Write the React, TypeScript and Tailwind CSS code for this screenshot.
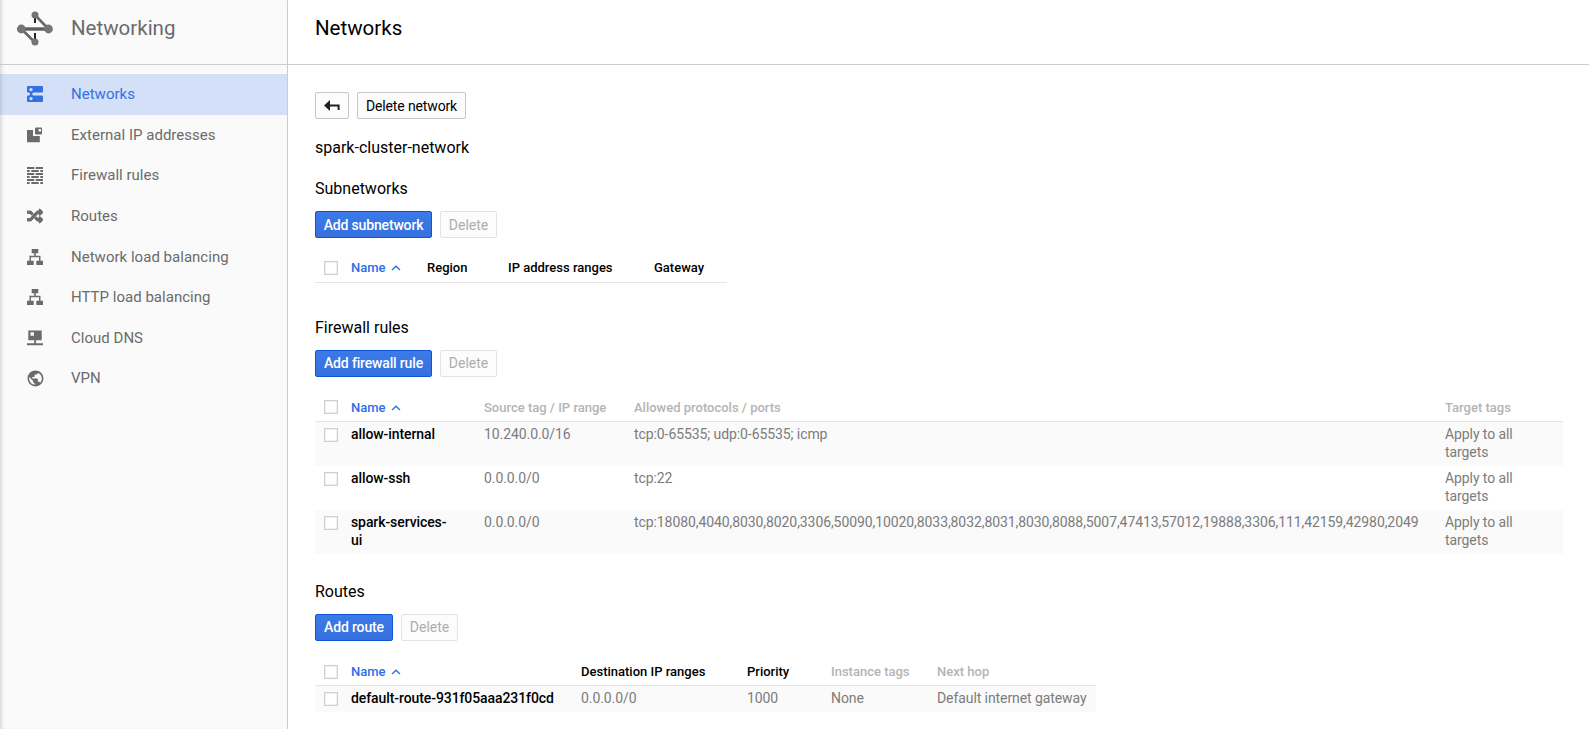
import type { ReactNode } from "react";
import { FaRandom } from "react-icons/fa";
import { MdPublic } from "react-icons/md";
import clsx from "clsx";

const NetworksIcon = () => (
  <svg width="16" height="16" viewBox="0 0 16 16" fill="currentColor">
    <path
      fillRule="evenodd"
      d="M1 0h14a1 1 0 0 1 1 1v4.6a1 1 0 0 1-1 1H6.2L5 8l1.2 1.4H15a1 1 0 0 1 1 1V15a1 1 0 0 1-1 1H1a1 1 0 0 1-1-1v-4.6a1 1 0 0 1 1-1h1.2L3.2 8 2.2 6.6H1a1 1 0 0 1-1-1V1a1 1 0 0 1 1-1ZM4 1.9a1.7 1.7 0 1 0 0 3.4 1.7 1.7 0 0 0 0-3.4ZM4 10.9a1.7 1.7 0 1 0 0 3.4 1.7 1.7 0 0 0 0-3.4Z"
    />
  </svg>
);

const ExternalIpIcon = () => (
  <svg width="16" height="16" viewBox="0 0 16 16" fill="currentColor">
    <path d="M0 3h6v6h6.8v6.2H0Z" />
    <path
      fillRule="evenodd"
      d="M9 .4h5a1 1 0 0 1 1 1v5a1 1 0 0 1-1 1H9a1 1 0 0 1-1-1v-5a1 1 0 0 1 1-1Zm2.6 1.6v2.4H14V2Z"
    />
  </svg>
);

const FirewallIcon = () => (
  <svg width="16" height="17" viewBox="0 0 16 17" fill="none" stroke="currentColor" strokeWidth="1.9">
    <path d="M0 1h7.3M8.7 1H16M0 7h7.3M8.7 7H16M0 13h7.3M8.7 13H16" />
    <path d="M0 4h2.7M4.3 4h7.4M13.3 4H16M0 10h2.7M4.3 10h7.4M13.3 10H16M0 16h2.7M4.3 16h7.4M13.3 16H16" />
  </svg>
);

const BalancerIcon = () => (
  <svg width="16" height="16" viewBox="0 0 16 16" fill="currentColor">
    <path d="M4.7 0h6.6v4.2H8.8v2.5h4.7v5H16V16H9.3v-4.3H12V8.2H4v3.5h2.7V16H0v-4.3h2.5v-5h4.7V4.2H4.7Z" />
  </svg>
);

const DnsIcon = () => (
  <svg width="16" height="16" viewBox="0 0 16 16" fill="currentColor">
    <path
      fillRule="evenodd"
      d="M1.3.5h13.4v9.7H9v3h7v2H0v-2h7.2v-3H1.3Zm2.2 1.8v3.4h3.4V2.3Z"
    />
  </svg>
);

const LogoIcon = () => (
  <svg width="38" height="36" viewBox="0 0 38 36">
    <path d="M19 5v7M19 22v9" stroke="#212121" strokeWidth="2" />
    <path d="M19 4 32.5 18M5.5 18 19 31.5" stroke="#686868" strokeWidth="2.6" />
    <path d="M5 18h28" stroke="#5f5f5f" strokeWidth="3.4" />
    <g fill="#757575">
      <circle cx="5.3" cy="18" r="4.4" />
      <circle cx="32.5" cy="18" r="4.4" />
      <circle cx="19" cy="4" r="3.5" />
      <circle cx="19" cy="31" r="3.5" />
    </g>
  </svg>
);

const NAV: { label: string; icon: ReactNode }[] = [
  { label: "Networks", icon: <NetworksIcon /> },
  { label: "External IP addresses", icon: <ExternalIpIcon /> },
  { label: "Firewall rules", icon: <FirewallIcon /> },
  { label: "Routes", icon: <FaRandom size={16} className="stroke-current stroke-[28]" /> },
  { label: "Network load balancing", icon: <BalancerIcon /> },
  { label: "HTTP load balancing", icon: <BalancerIcon /> },
  { label: "Cloud DNS", icon: <DnsIcon /> },
  { label: "VPN", icon: <MdPublic size={19} className="-m-[1.5px] shrink-0" /> },
];

const Sidebar = () => (
  <aside className="w-72 shrink-0 border-r border-[#cccccc] bg-[#fafafa] text-[#6b6b6b] shadow-[inset_4px_0_4px_-3px_rgba(0,0,0,0.18)]">
    <div className="flex h-[65px] items-center border-b border-[#cccccc] pb-[7px] pl-4">
      <LogoIcon />
      <span className="ml-[17px] text-[20.5px]">Networking</span>
    </div>
    <nav className="pt-[9.1px]">
      {NAV.map(({ label, icon }, i) => (
        <a
          key={label}
          className={clsx(
            "flex h-[40.6px] items-center pl-[27px] text-[15px] tracking-[0.02px]",
            i === 0 &&
              "bg-[#d4e0f7] text-[#3371e3] shadow-[inset_4px_0_4px_-3px_rgba(0,0,0,0.15)]"
          )}
        >
          <span className="flex w-4">{icon}</span>
          <span className="ml-7">{label}</span>
        </a>
      ))}
    </nav>
  </aside>
);

interface ButtonProps {
  children: ReactNode;
  variant?: "default" | "primary" | "disabled";
  className?: string;
}

const Button = ({ children, variant = "default", className }: ButtonProps) => (
  <button
    disabled={variant === "disabled"}
    className={clsx(
      "flex h-[27px] items-center justify-center rounded-[2px] border text-sm",
      variant === "default" && "border-[#c6c6c6] bg-[#fcfcfc] tracking-[-0.13px] text-black",
      variant === "primary" &&
        "border-[#0d55d6] bg-linear-to-b from-[#3c7ae9] to-[#3571de] font-medium tracking-[-0.16px] text-white",
      variant === "disabled" && "border-[#e3e3e3] bg-[#fcfcfc] text-[#aeaeae]",
      className
    )}
  >
    {children}
  </button>
);

const Checkbox = () => (
  <span className="block size-3.5 border border-[#cfcfcf] bg-white shadow-[inset_0_0_0_0.5px_#e3e3e3]" />
);

interface Column {
  label: string;
  width: string;
  sortable?: boolean;
}

interface TableProps {
  columns: Column[];
  rows?: string[][];
  className: string;
}

const Table = ({ columns, rows = [], className }: TableProps) => (
  <table className={clsx("table-fixed border-collapse text-left", className)}>
    <thead>
      <tr className="h-7 border-b border-[#e5e5e5] text-[13px] leading-4">
        <th className="w-[36px] p-0 pl-[9px]">
          <Checkbox />
        </th>
        {columns.map(({ label, width, sortable }, i) => (
          <th
            key={label}
            className={clsx(
              "p-0 pt-px font-medium whitespace-nowrap",
              width,
              i === 0 ? "text-[#2a6ee8]" : sortable ? "text-black" : "text-[#b4b4b4]"
            )}
          >
            {label}
            {i === 0 && (
              <svg className="ml-[5px] inline-block align-[1px]" width="10" height="6" viewBox="0 0 10 6">
                <path d="M1 5 5 1.2 9 5" fill="none" stroke="currentColor" strokeWidth="1.3" />
              </svg>
            )}
          </th>
        ))}
      </tr>
    </thead>
    <tbody className="text-sm leading-[18.3px] tracking-[-0.085px] text-[#7c7c7c]">
      {rows.map((cells) => (
        <tr key={cells[0]} className="align-top odd:bg-[#fafafa]">
          <td className="pt-[6px] pl-[9px]">
            <Checkbox />
          </td>
          {cells.map((cell, i) => (
            <td
              key={i}
              className={clsx(
                "pt-[3px] pb-[4.4px] whitespace-pre-line last:pr-[7px]",
                i === 0 && "font-medium text-black"
              )}
            >
              {cell}
            </td>
          ))}
        </tr>
      ))}
    </tbody>
  </table>
);

interface SectionProps {
  title: string;
  action: string;
  actionWidth: string;
  className?: string;
  children: ReactNode;
}

const Section = ({ title, action, actionWidth, className, children }: SectionProps) => (
  <section className={className}>
    <h3 className="h-[33px] pt-px text-base leading-5">{title}</h3>
    <div className="flex gap-2">
      <Button variant="primary" className={actionWidth}>
        {action}
      </Button>
      <Button variant="disabled" className="w-[57px]">
        Delete
      </Button>
    </div>
    {children}
  </section>
);

const FIREWALL_ROWS = [
  ["allow-internal", "10.240.0.0/16", "tcp:0-65535; udp:0-65535; icmp", "Apply to all targets"],
  ["allow-ssh", "0.0.0.0/0", "tcp:22", "Apply to all targets"],
  [
    "spark-services-\nui",
    "0.0.0.0/0",
    "tcp:18080,4040,8030,8020,3306,50090,10020,8033,8032,8031,8030,8088,5007,47413,57012,19888,3306,111,42159,42980,2049",
    "Apply to all targets",
  ],
];

const App = () => {
  return (
    <div className="flex h-screen overflow-hidden bg-white font-[Roboto,sans-serif] text-black">
      <Sidebar />
      <main className="min-w-0 flex-1">
        <header className="flex h-[65px] items-center border-b border-[#cccccc] pb-[7px] pl-[27px]">
          <h1 className="text-[20.5px]">Networks</h1>
        </header>
        <div className="pt-[27px] pl-[27px]">
          <div className="flex gap-2">
            <Button className="w-[34px]">
              <svg width="16" height="11" viewBox="0 0 16 11" fill="#212121">
                <path d="M0 5.5 6 0v4.4h9.6V10h-2V6.4H6V11Z" />
              </svg>
            </Button>
            <Button className="w-[109px]">Delete network</Button>
          </div>
          <h2 className="mt-[19px] text-base leading-5">spark-cluster-network</h2>

          <Section
            title="Subnetworks"
            action="Add subnetwork"
            actionWidth="w-[117px]"
            className="mt-5"
          >
            <Table
              className="mt-4 w-[412px]"
              columns={[
                { label: "Name", width: "w-[76px]", sortable: true },
                { label: "Region", width: "w-[81px]", sortable: true },
                { label: "IP address ranges", width: "w-[146px]", sortable: true },
                { label: "Gateway", width: "w-[73px]", sortable: true },
              ]}
            />
          </Section>

          <Section
            title="Firewall rules"
            action="Add firewall rule"
            actionWidth="w-[117px]"
            className="mt-[34px]"
          >
            <Table
              className="mt-[17px] w-[1248px]"
              columns={[
                { label: "Name", width: "w-[133px]", sortable: true },
                { label: "Source tag / IP range", width: "w-[150px]" },
                { label: "Allowed protocols / ports", width: "w-[811px]" },
                { label: "Target tags", width: "w-[118px]" },
              ]}
              rows={FIREWALL_ROWS}
            />
          </Section>

          <Section title="Routes" action="Add route" actionWidth="w-[78px]" className="mt-[27px]">
            <Table
              className="mt-[17px] w-[781px]"
              columns={[
                { label: "Name", width: "w-[230px]", sortable: true },
                { label: "Destination IP ranges", width: "w-[166px]", sortable: true },
                { label: "Priority", width: "w-[84px]", sortable: true },
                { label: "Instance tags", width: "w-[106px]" },
                { label: "Next hop", width: "w-[159px]" },
              ]}
              rows={[
                [
                  "default-route-931f05aaa231f0cd",
                  "0.0.0.0/0",
                  "1000",
                  "None",
                  "Default internet gateway",
                ],
              ]}
            />
          </Section>
        </div>
      </main>
    </div>
  );
};

export default App;
